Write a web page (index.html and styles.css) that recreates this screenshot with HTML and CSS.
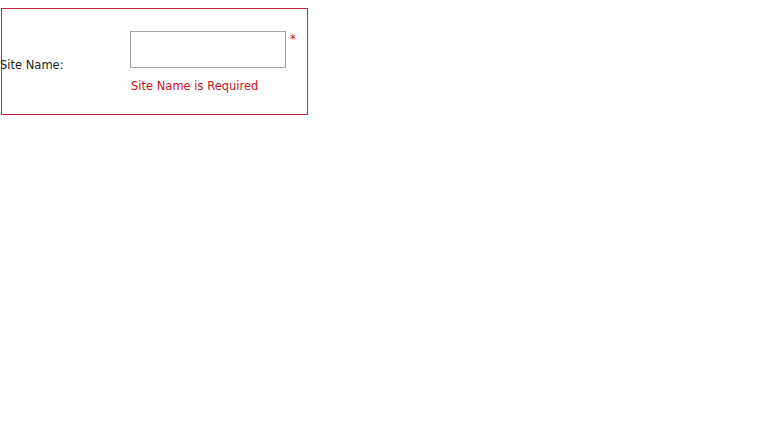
FILE: index.html
```html
<!DOCTYPE html>
<html>
<head>
<meta charset="utf-8">
<link rel="stylesheet" href="styles.css">
</head>
<body>
<div class="field">
  <label class="label" for="site">Site Name:</label>
  <div class="control">
    <div class="input-row">
      <input id="site" class="input" type="text">
      <span class="req">*</span>
    </div>
    <div class="error">Site Name is Required</div>
  </div>
</div>
</body>
</html>
```
FILE: styles.css
```css
html, body {
  margin: 0;
  padding: 0;
  background: #fff;
}
body {
  font-family: "DejaVu Sans", Verdana, sans-serif;
  font-size: 11.5px;
  color: #222;
}
.field {
  margin: 8px 0 0 1px;
  border: 1px solid #c3253c;
  display: flex;
  box-sizing: border-box;
  width: 307px;
  height: 107px;
}
.label {
  width: 130px;
  margin-left: -2px;
  margin-top: 49px;
  line-height: 14px;
  flex: none;
}
.control {
  padding-top: 22px;
}
.input-row {
  display: flex;
  align-items: flex-start;
}
.input {
  width: 156px;
  height: 37px;
  box-sizing: border-box;
  border: 1px solid #a5a5a5;
  margin: 0;
  padding: 0 2px;
  font: inherit;
  outline: none;
  background: #fff;
}
.req {
  color: #c8102e;
  margin-left: 4px;
  margin-top: 1px;
  line-height: 14px;
}
.error {
  color: #d0101e;
  margin-top: 11px;
  margin-left: 1px;
  line-height: 14px;
}
```
